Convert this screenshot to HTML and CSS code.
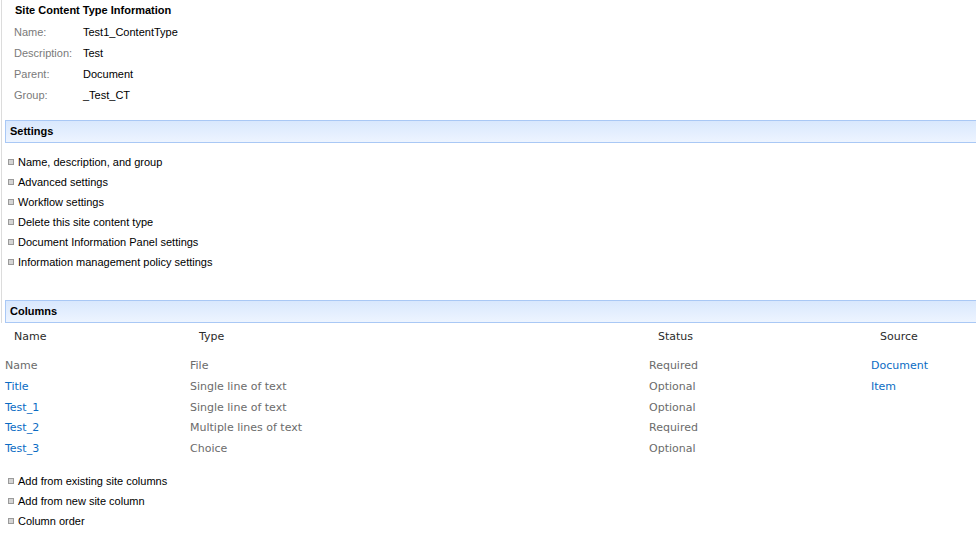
FILE: index.html
```html
<!DOCTYPE html>
<html>
<head>
<meta charset="utf-8">
<link rel="stylesheet" href="styles.css">
</head>
<body>
<div class="page">
  <div class="framed">
    <div class="title">Site Content Type Information</div>
    <div class="info">
      <div class="info-row"><span class="label">Name:</span><span class="value">Test1_ContentType</span></div>
      <div class="info-row"><span class="label">Description:</span><span class="value">Test</span></div>
      <div class="info-row"><span class="label">Parent:</span><span class="value">Document</span></div>
      <div class="info-row"><span class="label">Group:</span><span class="value">_Test_CT</span></div>
    </div>
    <div class="band band-settings">Settings</div>
    <ul class="links">
      <li><span class="bullet"></span>Name, description, and group</li>
      <li><span class="bullet"></span>Advanced settings</li>
      <li><span class="bullet"></span>Workflow settings</li>
      <li><span class="bullet"></span>Delete this site content type</li>
      <li><span class="bullet"></span>Document Information Panel settings</li>
      <li><span class="bullet"></span>Information management policy settings</li>
    </ul>
    <div class="band band-columns">Columns</div>
  </div>
  <div class="grid head">
    <span>Name</span><span>Type</span><span>Status</span><span>Source</span>
  </div>
  <div class="rows">
    <div class="grid row"><span>Name</span><span>File</span><span>Required</span><span class="link">Document</span></div>
    <div class="grid row"><span class="link">Title</span><span>Single line of text</span><span>Optional</span><span class="link">Item</span></div>
    <div class="grid row"><span class="link">Test_1</span><span>Single line of text</span><span>Optional</span><span></span></div>
    <div class="grid row"><span class="link">Test_2</span><span>Multiple lines of text</span><span>Required</span><span></span></div>
    <div class="grid row"><span class="link">Test_3</span><span>Choice</span><span>Optional</span><span></span></div>
  </div>
  <ul class="links links-bottom">
    <li><span class="bullet"></span>Add from existing site columns</li>
    <li><span class="bullet"></span>Add from new site column</li>
    <li><span class="bullet"></span>Column order</li>
  </ul>
</div>
</body>
</html>
```

FILE: styles.css
```css
html, body {
  margin: 0;
  padding: 0;
  background: #ffffff;
}
body {
  font-family: "Liberation Sans", Arial, sans-serif;
  font-size: 11px;
  color: #000000;
  overflow: hidden;
}
.page {
  width: 976px;
}
.framed {
  margin-left: 1px;
  border-left: 1px solid #dcdcdc;
}
.title {
  font-weight: bold;
  line-height: 21px;
  padding-left: 13px;
}
.info {
  padding-top: 1px;
}
.info-row {
  display: flex;
  line-height: 21px;
  padding-left: 12px;
}
.label {
  width: 69px;
  color: #7a7a7a;
}
.value {
  color: #000000;
}
.band {
  margin-left: 3px;
  line-height: 21px;
  font-weight: bold;
  padding-left: 4px;
  border-top: 1px solid #a9c8f5;
  border-bottom: 1px solid #a9c8f5;
  border-left: 1px solid #a9c8f5;
  background: linear-gradient(#d9e8fd, #edf4ff);
}
.band-settings {
  margin-top: 14px;
}
.band-columns {
  margin-top: 28px;
}
.links {
  list-style: none;
  margin: 9px 0 0 0;
  padding: 0 0 0 6px;
}
.links li {
  display: flex;
  align-items: center;
  line-height: 20px;
}
.bullet {
  width: 4px;
  height: 4px;
  border: 1px solid #9a9a9a;
  background: #d4d4d4;
  margin-right: 4px;
  flex: none;
}
.links-bottom {
  margin-top: 12px;
  padding-left: 8px;
}
.grid {
  display: grid;
  grid-template-columns: 185px 459px 222px 1fr;
  padding-left: 5px;
  font-family: "DejaVu Sans", Verdana, sans-serif;
  font-size: 11px;
}
.head {
  margin-top: 4px;
  line-height: 20px;
  color: #2b2b2b;
}
.head span {
  padding-left: 9px;
}
.rows {
  margin-top: 8px;
}
.row {
  line-height: 21px;
  color: #6b6b6b;
}
.row:nth-child(n+4) {
  line-height: 20.5px;
}
.link {
  color: #0a6cc4;
}
```
